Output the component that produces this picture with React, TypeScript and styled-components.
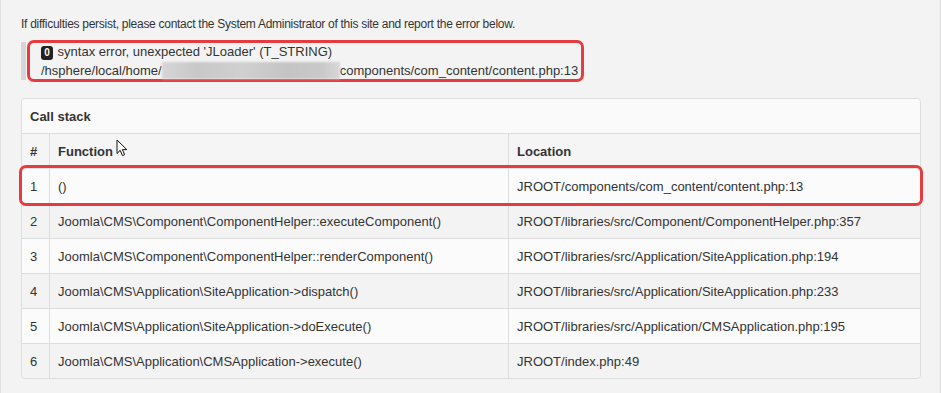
import styled, { createGlobalStyle } from 'styled-components';

const GlobalStyle = createGlobalStyle`
  html, body {
    margin: 0;
    padding: 0;
    background: #ffffff;
  }
  body {
    font-family: "Liberation Sans", Arial, sans-serif;
    font-size: 13px;
    color: #333333;
  }
`;

const frames = [
  {
    fn: '()',
    loc: 'JROOT/components/com_content/content.php:13',
  },
  {
    fn: 'Joomla\\CMS\\Component\\ComponentHelper::executeComponent()',
    loc: 'JROOT/libraries/src/Component/ComponentHelper.php:357',
  },
  {
    fn: 'Joomla\\CMS\\Component\\ComponentHelper::renderComponent()',
    loc: 'JROOT/libraries/src/Application/SiteApplication.php:194',
  },
  {
    fn: 'Joomla\\CMS\\Application\\SiteApplication->dispatch()',
    loc: 'JROOT/libraries/src/Application/SiteApplication.php:233',
  },
  {
    fn: 'Joomla\\CMS\\Application\\SiteApplication->doExecute()',
    loc: 'JROOT/libraries/src/Application/CMSApplication.php:195',
  },
  {
    fn: 'Joomla\\CMS\\Application\\CMSApplication->execute()',
    loc: 'JROOT/index.php:49',
  },
];

function Cursor() {
  return (
    <CursorIcon width="13" height="19" viewBox="0 0 13 19">
      <path
        d="M1 1 L1 14.5 L4.2 11.4 L6.4 16.6 L8.6 15.7 L6.4 10.6 L10.8 10.6 Z"
        fill="#ffffff"
        stroke="#111111"
        strokeWidth="1"
        strokeLinejoin="miter"
      />
    </CursorIcon>
  );
}

export default function App() {
  return (
    <>
      <GlobalStyle />
      <Page>
        <Notice>
          If difficulties persist, please contact the System Administrator of
          this site and report the error below.
        </Notice>
        <Quote>
          <ErrorBox>
            <div>
              <Badge>0</Badge> syntax error, unexpected 'JLoader' (T_STRING)
            </div>
            <PathLine>
              /hsphere/local/home/
              <Blurred />
              components/com_content/content.php:13
            </PathLine>
          </ErrorBox>
        </Quote>

        <Card>
          <CardHeader>Call stack</CardHeader>
          <Row $head>
            <Cell>#</Cell>
            <Cell>
              Function
              <Cursor />
            </Cell>
            <Cell>Location</Cell>
          </Row>
          {frames.map((item, idx) => (
            <Row key={idx} $striped={idx % 2 === 1} $marked={idx === 0}>
              <Cell>{idx + 1}</Cell>
              <Cell>{item.fn}</Cell>
              <Cell>{item.loc}</Cell>
            </Row>
          ))}
        </Card>
      </Page>
    </>
  );
}

const Page = styled.div`
  width: 941px;
  height: 393px;
  box-sizing: border-box;
  padding: 15px 20px 0 20px;
  background: #f3f3f3;
  border-left: 1px solid #e0e0e0;
  border-right: 1px solid #e0e0e0;
`;

const Notice = styled.p`
  margin: 0 0 9px 0;
  line-height: 18px;
  font-size: 12px;
  letter-spacing: -0.28px;
  color: #333333;
`;

const Quote = styled.div`
  display: flex;
  margin: 0 0 18px 0;
  border-left: 5px solid #d6d6d6;
`;

const ErrorBox = styled.div`
  margin-left: 3px;
  padding: 0 4px 0 12px;
  line-height: 19px;
  font-size: 13px;
  color: #333333;
  outline: 3px solid #e63b3f;
  outline-offset: -1px;
  border-radius: 5px;
`;

const Badge = styled.span`
  display: inline-block;
  width: 12px;
  height: 14px;
  line-height: 14px;
  border-radius: 3px;
  background: #222222;
  color: #ffffff;
  font-size: 10px;
  font-weight: bold;
  text-align: center;
  vertical-align: 0;
  margin-right: 1px;
`;

const PathLine = styled.div`
  display: flex;
  align-items: center;
`;

const Blurred = styled.span`
  display: inline-block;
  width: 178px;
  height: 17px;
  background: linear-gradient(
    90deg,
    #d6d6d6 0%,
    #c8c8c8 20%,
    #d0d0d0 45%,
    #c4c4c4 70%,
    #c9c9c9 90%,
    #d8d8d8 100%
  );
  filter: blur(0.8px);
`;

const Card = styled.div`
  width: 900px;
  box-sizing: border-box;
  border: 1px solid #dddddd;
  border-radius: 4px;
  background: #fbfbfb;
`;

const CardHeader = styled.div`
  height: 34px;
  display: flex;
  align-items: center;
  padding-left: 8px;
  font-weight: bold;
  font-size: 13px;
  color: #333333;
  border-bottom: 1px solid #dddddd;
  background: #fafafa;
  border-radius: 4px 4px 0 0;
`;

const Row = styled.div<{ $head?: boolean; $striped?: boolean; $marked?: boolean }>`
  display: grid;
  grid-template-columns: 27px 459px 1fr;
  height: 34px;
  font-size: 13px;
  font-weight: ${(p) => (p.$head ? 'bold' : 'normal')};
  background: ${(p) =>
    p.$head ? '#f5f5f5' : p.$striped ? '#f3f3f3' : '#fbfbfb'};
  & + & {
    border-top: 1px solid #dddddd;
  }
  &:last-child {
    border-radius: 0 0 4px 4px;
  }
  ${(p) =>
    p.$marked &&
    `
    position: relative;
    z-index: 1;
    outline: 3px solid #e63b3f;
    outline-offset: 0;
    border-radius: 4px;
  `}
`;

const Cell = styled.div`
  display: flex;
  align-items: center;
  padding-left: 8px;
  position: relative;
  & + & {
    border-left: 1px solid #dddddd;
  }
`;

const CursorIcon = styled.svg`
  position: absolute;
  left: 66px;
  top: 5px;
`;
